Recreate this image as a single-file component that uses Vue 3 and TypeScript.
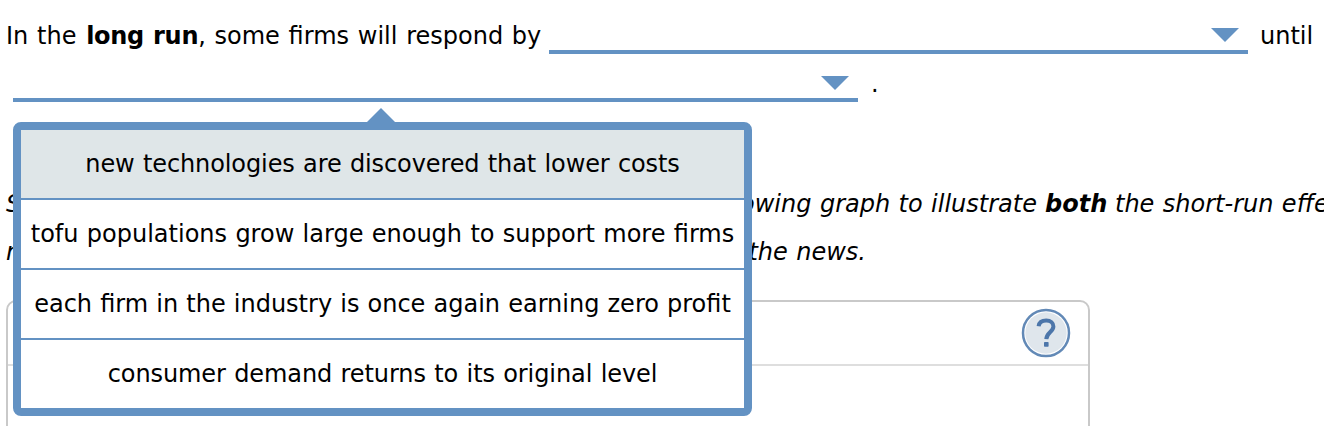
<script setup lang="ts">
import { ref } from 'vue'

interface Choice {
  id: string
  text: string
}

const choices: Choice[] = [
  { id: 'technology', text: 'new technologies are discovered that lower costs' },
  { id: 'population', text: 'tofu populations grow large enough to support more firms' },
  { id: 'profit', text: 'each firm in the industry is once again earning zero profit' },
  { id: 'demand', text: 'consumer demand returns to its original level' },
]
const active = ref('technology')
</script>

<template>
  <main class="page">
    <p class="line first">
      <span class="words intro">In the <b class="long-run">long run</b>, some firms will respond by</span>
      <span class="blank blank-one"><i class="arrow"></i></span>
      <span class="until">until</span>
    </p>
    <div class="line second">
      <span class="blank blank-two">
        <i class="arrow"></i>
      </span>
      <span class="period">.</span>
      <div class="menu" role="listbox">
        <button
          v-for="choice in choices"
          :key="choice.id"
          type="button"
          class="choice"
          :class="[choice.id, { active: active === choice.id }]"
          @mouseenter="active = choice.id"
        >{{ choice.text }}</button>
      </div>
    </div>

    <div class="instructions">
      <p class="line">
        <span class="covered">Shift the supply curve, the demand curve, or</span>
        <span class="tail tail-one">following graph to illustrate</span>
        <b class="both">both</b>
        <span class="effects">the short-run effects</span>
      </p>
      <p class="line">
        <span class="covered">news and the new long-run equilibrium after</span>
        <span class="tail tail-two">the news.</span>
      </p>
    </div>

    <section class="panel">
      <header class="panel-head">
        <svg class="help" viewBox="0 0 50 50" aria-label="Help">
          <circle cx="25" cy="25" r="23" fill="#fff" stroke="#6289b6" stroke-width="2.5" />
          <circle cx="25" cy="25" r="20.7" fill="#dfe6ec" />
          <path d="M17.6 18.2C18.2 14.4 21 12.6 25.2 12.6C29.8 12.6 32.4 15 32.4 18.5C32.4 23.8 25.6 24.3 25.3 31.2" fill="none" stroke="#4c76aa" stroke-width="4" />
          <rect x="23" y="34" width="4.6" height="4.8" rx=".7" fill="#4c76aa" />
        </svg>
      </header>
    </section>
  </main>
</template>

<style scoped>
.page {
  box-sizing: border-box;
  width: 1324px;
  height: 426px;
  padding: 12px 0 0 6px;
  overflow: hidden;
  background: #fff;
  color: #000;
  font: 24px/48px "DejaVu Sans", Verdana, sans-serif;
  word-spacing: 0.8px;
}
.line {
  display: flex;
  height: 48px;
  margin: 0;
  white-space: nowrap;
}
.words {
  flex: none;
}
.intro {
  width: 543px;
  word-spacing: 1.1px;
}
.long-run {
  margin-left: 1px;
  letter-spacing: -0.3px;
}
.blank {
  box-sizing: border-box;
  flex: none;
  display: flex;
  justify-content: flex-end;
  height: 42px;
  border-bottom: 4px solid #6392c3;
}
.blank-one {
  width: 699px;
  padding: 16px 9px 0 0;
}
.blank-two {
  width: 845px;
  margin-left: 7px;
  padding: 16px 9px 0 0;
}
.arrow {
  width: 28px;
  height: 14px;
  background: #6392c3;
  clip-path: polygon(0 0, 100% 0, 50% 100%);
}
.until {
  margin-left: 12px;
}
.second {
  position: relative;
}
.period {
  margin-left: 13px;
}
.menu {
  position: absolute;
  z-index: 2;
  top: 62px;
  left: 7px;
  box-sizing: border-box;
  width: 739px;
  height: 294px;
  border: 8px solid #6392c3;
  border-radius: 8px;
  background: #fff;
}
.menu::before {
  content: "";
  position: absolute;
  top: -22px;
  left: 346px;
  width: 28px;
  height: 14px;
  background: #6392c3;
  clip-path: polygon(50% 0, 100% 100%, 0 100%);
}
.choice {
  box-sizing: border-box;
  display: block;
  width: 100%;
  height: 70px;
  padding: 1px 0 0;
  border: 0;
  border-bottom: 2px solid #6392c3;
  background: #fff;
  color: #000;
  font: inherit;
  line-height: 67px;
  text-align: center;
  white-space: nowrap;
}
.choice:last-child {
  height: 68px;
  border-bottom: 0;
}
.choice.active {
  background: #dfe6e8;
}
.choice.technology {
  letter-spacing: -0.1px;
  word-spacing: 0.8px;
}
.choice.population {
  word-spacing: 0.7px;
}
.choice.profit {
  word-spacing: 0.5px;
}
.choice.demand {
  letter-spacing: -0.08px;
  word-spacing: 0.8px;
}
.instructions {
  padding-top: 72px;
  font-style: italic;
}
.covered {
  flex: none;
  width: 640px;
}
.tail {
  flex: none;
  display: flex;
  justify-content: flex-end;
}
.tail-one {
  width: 391px;
}
.tail-two {
  width: 220px;
}
.both {
  flex: none;
  width: 70px;
  margin-left: 8px;
}
.effects {
  flex: none;
}
.panel {
  box-sizing: border-box;
  width: 1084px;
  height: 160px;
  margin-top: 24px;
  border: 2px solid #c9c9c9;
  border-radius: 10px;
}
.panel-head {
  box-sizing: border-box;
  display: flex;
  justify-content: flex-end;
  height: 64px;
  padding: 6px 17px 0 0;
  border-bottom: 2px solid #dedede;
}
.help {
  width: 50px;
  height: 50px;
}
</style>
